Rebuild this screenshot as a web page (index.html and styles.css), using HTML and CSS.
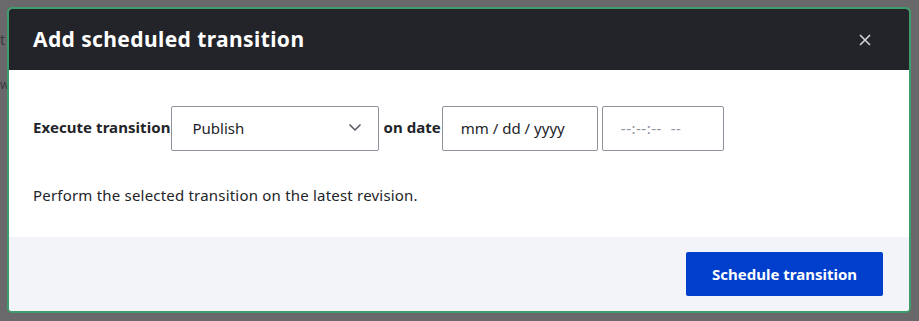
FILE: index.html
```html
<!DOCTYPE html>
<html lang="en">
<head>
  <meta charset="UTF-8" />
  <title>Add scheduled transition</title>
  <link rel="stylesheet" href="styles.css">
</head>
<body>

<div class="page-behind">
  <span class="behind-t">t</span>
  <span class="behind-w">w</span>
</div>

<div class="dialog">
  <div class="dialog-header">
    <h2>Add scheduled transition</h2>
    <button class="close" aria-label="Close">
      <svg width="12" height="12" viewBox="0 0 12 12">
        <path d="M1 1 L11 11 M11 1 L1 11" stroke="#d3d4d9" stroke-width="1.6" fill="none"/>
      </svg>
    </button>
  </div>

  <div class="dialog-body">
    <div class="form-row">
      <label class="label">Execute transition</label>
      <div class="select">
        <span>Publish</span>
        <svg width="14" height="9" viewBox="0 0 14 9">
          <path d="M1.5 1.5 L7 7 L12.5 1.5" stroke="#545560" stroke-width="1.5" fill="none"/>
        </svg>
      </div>
      <label class="label on-date">on date</label>
      <div class="field date">mm / dd / yyyy</div>
      <div class="field time">--:--:--&nbsp;&nbsp;--</div>
    </div>
    <p class="description">Perform the selected transition on the latest revision.</p>
  </div>

  <div class="dialog-footer">
    <button class="btn">Schedule transition</button>
  </div>
</div>

</body>
</html>
```

FILE: styles.css
```css
/* base */
body {
  margin: 0;
  font-family: 'Noto Sans', 'DejaVu Sans', sans-serif;
  background-color: #69696c;
  color: #232429;
  position: relative;
  overflow: hidden;
}

/* faint page text behind the overlay */
.page-behind {
  position: absolute;
  top: 0;
  left: 0;
  color: #3a3a3e;
  font-size: 14px;
}

.behind-t {
  position: absolute;
  top: 30px;
  left: 0;
}

.behind-w {
  position: absolute;
  top: 76px;
  left: 0;
  font-size: 12px;
}

/* dialog */
.dialog {
  position: relative;
  margin: 7px 0 0 7px;
  width: 900px;
  height: 302px;
  border: 2px solid #3d9c6c;
  border-radius: 5px;
  overflow: hidden;
  background: #fff;
  display: flex;
  flex-direction: column;
}

.dialog-header {
  display: flex;
  align-items: center;
  justify-content: space-between;
  height: 61px;
  padding: 0 38px 0 24px;
  background: #232429;
  flex-shrink: 0;
}

.dialog-header h2 {
  margin: 0;
  color: #fff;
  font-size: 21px;
  font-weight: 700;
  letter-spacing: 0.4px;
  padding-bottom: 1px;
}

.close {
  background: none;
  border: none;
  padding: 0;
  width: 12px;
  height: 12px;
  display: flex;
}

/* body */
.dialog-body {
  flex-grow: 1;
  padding: 36px 24px 0;
}

.form-row {
  display: flex;
  align-items: center;
}

.label {
  font-size: 15px;
  font-weight: 700;
  letter-spacing: 0.06px;
  padding-bottom: 3px;
}

.select {
  display: flex;
  align-items: center;
  justify-content: space-between;
  box-sizing: border-box;
  width: 208px;
  height: 45px;
  margin-left: 1px;
  padding: 0 16px 2px 20px;
  border: 1px solid #8e929c;
  border-radius: 2px;
  font-size: 15px;
}

.on-date {
  margin-left: 4px;
}

.field {
  box-sizing: border-box;
  height: 45px;
  display: flex;
  align-items: center;
  padding-bottom: 2px;
  border: 1px solid #8e929c;
  border-radius: 2px;
  font-size: 15px;
}

.date {
  width: 156px;
  margin-left: 1px;
  padding-left: 18px;
}

.time {
  width: 122px;
  margin-left: 4px;
  padding-left: 18px;
  color: #8e929c;
  letter-spacing: 0.5px;
}

.description {
  margin: 34px 0 0;
  font-size: 15px;
  letter-spacing: 0.2px;
}

/* footer */
.dialog-footer {
  display: flex;
  justify-content: flex-end;
  height: 74px;
  box-sizing: border-box;
  padding: 15px 26px 0 0;
  background: #f3f4f9;
  flex-shrink: 0;
}

.btn {
  width: 197px;
  height: 44px;
  background: #003ecc;
  color: #fff;
  border: none;
  border-radius: 2px;
  font-family: inherit;
  font-size: 15px;
  font-weight: 700;
  cursor: pointer;
}
```
